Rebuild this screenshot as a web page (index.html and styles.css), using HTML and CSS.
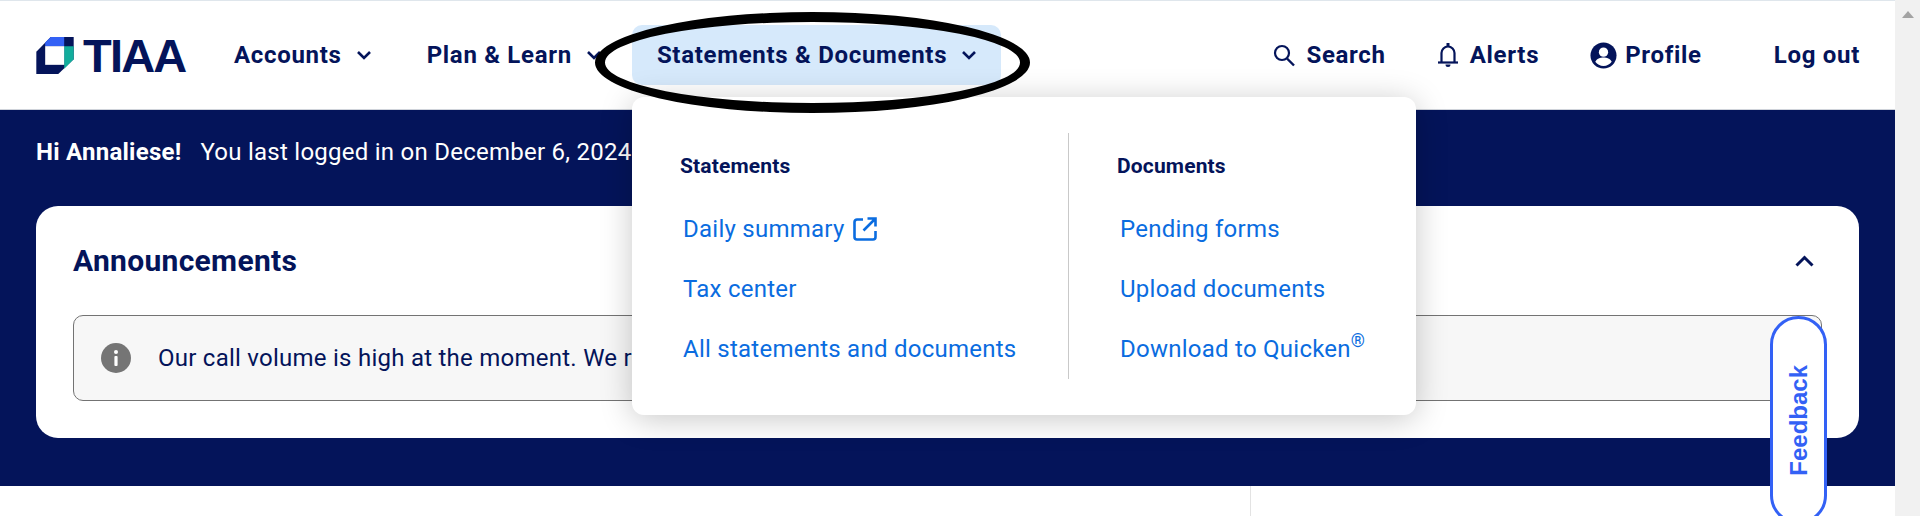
FILE: index.html
```html
<!DOCTYPE html>
<html lang="en">
<head>
<meta charset="utf-8">
<title>TIAA</title>
<link rel="stylesheet" href="styles.css">
</head>
<body>
<div class="page">
  <main class="main">
    <header class="header">
      <a class="logo">
        <svg class="logo-mark" viewBox="0 0 114 113" aria-hidden="true">
          <path fill="#04145a" d="M0 45 44 0H114V68L67 113H0Z"/>
          <path fill="#3361f5" d="M44 0H85V28H27V17Z"/>
          <path fill="#12ad9c" d="M85 28H114V68L85 97Z"/>
          <path fill="#fff" d="M27 28H85V85H27Z"/>
        </svg>
        <span class="logo-text">TIAA</span>
      </a>
      <nav class="nav">
        <a class="nav-item">Accounts<svg class="chev" viewBox="0 0 14 9"><path d="M1 1l6 6 6-6"/></svg></a>
        <a class="nav-item">Plan &amp; Learn<svg class="chev" viewBox="0 0 14 9"><path d="M1 1l6 6 6-6"/></svg></a>
        <a class="nav-item nav-item-active">Statements &amp; Documents<svg class="chev" viewBox="0 0 14 9"><path d="M1 1l6 6 6-6"/></svg></a>
      </nav>
      <div class="tools">
        <a class="tool">
          <svg class="tool-icon" viewBox="0 0 22 24"><circle cx="9" cy="10" r="7" fill="none" stroke="#04145a" stroke-width="2.200"/><path d="M14 15.500 21 22.500" stroke="#04145a" stroke-width="2.400" fill="none"/></svg>
          Search
        </a>
        <a class="tool">
          <svg class="tool-icon" viewBox="0 0 22 24"><path fill="none" stroke="#04145a" stroke-width="2.200" d="M4.500 19V10a6.500 6.500 0 0 1 13 0v9"/><path stroke="#04145a" stroke-width="2.200" d="M1 19.500h20"/><path fill="#04145a" d="M9.500 0h3v3h-3zM8.500 21.500h5a2.500 2.500 0 0 1-5 0z"/></svg>
          Alerts
        </a>
        <a class="tool tool-profile">
          <svg class="tool-icon-lg" viewBox="0 0 28 28"><circle cx="14" cy="14" r="13.500" fill="#04145a"/><circle cx="14" cy="10.500" r="4.800" fill="#fff"/><path fill="#fff" d="M5.500 20.500c1.500-3.500 5-4.500 8.500-4.500s7 1 8.500 4.500c-2 2.800-5 4.300-8.500 4.300s-6.500-1.500-8.500-4.300z"/></svg>
          Profile
        </a>
        <a class="tool tool-logout">Log out</a>
      </div>
    </header>

    <section class="hero">
      <p class="greeting"><strong class="greeting-name">Hi Annaliese!</strong><span>You last logged in on December 6, 2024</span></p>
      <div class="card">
        <div class="card-head">
          <h2 class="card-title">Announcements</h2>
          <svg class="chev-up" viewBox="0 0 19 12"><path d="M1.500 10.500 9.500 2.500l8 8"/></svg>
        </div>
        <div class="alert">
          <svg class="alert-icon" viewBox="0 0 30 30"><circle cx="15" cy="15" r="15" fill="#757575"/><circle cx="15" cy="9" r="2" fill="#fff"/><rect x="13.400" y="13" width="3.200" height="10" rx="1" fill="#fff"/></svg>
          <span>Our call volume is high at the moment. We r</span>
        </div>
      </div>
    </section>

    <div class="lower"><div class="lower-left"></div></div>
  </main>

  <aside class="scrollbar"><span class="scroll-up"></span></aside>

  <div class="menu">
    <div class="menu-col">
      <h3 class="menu-heading">Statements</h3>
      <a class="menu-link">Daily summary<svg class="ext" viewBox="0 0 24 24"><path d="M10 2.500H4A2.500 2.500 0 0 0 1.500 5v15A2.500 2.500 0 0 0 4 22.500h16a2.500 2.500 0 0 0 2.500-2.500v-6M14.500 1.500h8v8M22 2 10.500 13.500"/></svg></a>
      <a class="menu-link">Tax center</a>
      <a class="menu-link">All statements and documents</a>
    </div>
    <div class="menu-col menu-col-right">
      <h3 class="menu-heading">Documents</h3>
      <a class="menu-link">Pending forms</a>
      <a class="menu-link">Upload documents</a>
      <a class="menu-link">Download to Quicken<sup class="reg">®</sup></a>
    </div>
  </div>

  <div class="annotation"></div>

  <button class="feedback"><span class="feedback-label">Feedback</span></button>
</div>
</body>
</html>
```

FILE: styles.css
```css
* { box-sizing: border-box; }
html, body { margin: 0; height: 516px; overflow: hidden; background: #fff; }
body { font-family: Roboto, "Liberation Sans", sans-serif; color: #04145a; }

.page { position: relative; display: flex; width: 1920px; height: 516px; overflow: hidden; }
.main { flex: 1; display: flex; flex-direction: column; min-width: 0; }

/* Header */
.header {
  height: 110px;
  display: flex;
  align-items: center;
  padding: 0 35px 0 36px;
  border-top: 1px solid #dfe6ec;
  border-bottom: 1px solid #cfd3da;
  background: #fff;
}
.logo { display: flex; align-items: center; gap: 9px; width: 150px; }
.logo-mark { width: 38px; height: 37px; flex: none; }
.logo-text {
  font-family: "Liberation Sans", Arial, sans-serif;
  font-weight: 700;
  font-size: 47px;
  line-height: 37px;
  letter-spacing: -1.800px;
  color: #04145a;
}
.nav { display: flex; gap: 6px; margin-left: 23px; }
.nav-item {
  display: flex;
  align-items: center;
  gap: 15px;
  height: 60px;
  padding: 0 25px;
  border-radius: 10px;
  font-size: 24px;
  font-weight: 700;
  letter-spacing: 0.700px;
}
.nav-item-active { background: #d6e9fb; }
.chev { width: 14px; height: 9px; flex: none; }
.chev path, .chev-up path { fill: none; stroke: #04145a; stroke-width: 2.600; }
.chev-up path { stroke-width: 3; }

.tools { display: flex; align-items: center; gap: 51px; margin-left: auto; }
.tool {
  display: flex;
  align-items: center;
  gap: 11px;
  font-size: 24px;
  font-weight: 700;
  letter-spacing: 0.700px;
}
.tool-profile { gap: 8px; }
.tool-icon { width: 22px; height: 24px; flex: none; }
.tool-icon-lg { width: 27px; height: 27px; flex: none; }
.tool-logout { margin-left: 21px; }

/* Hero */
.hero { background: #04145a; height: 376px; padding: 0 36px; }
.greeting {
  margin: 0;
  height: 96px;
  display: flex;
  align-items: center;
  gap: 19px;
  padding-bottom: 12px;
  color: #fff;
  font-size: 24px;
  letter-spacing: 0.250px;
}
.greeting-name { font-weight: 700; }
.card {
  height: 232px;
  padding: 0 37px;
  background: #fff;
  border-radius: 22px;
}
.card-head {
  height: 109px;
  display: flex;
  align-items: center;
  justify-content: space-between;
}
.card-title { margin: 0; font-size: 30px; letter-spacing: 0.300px; font-weight: 700; }
.chev-up { width: 19px; height: 12px; margin-right: 8px; }
.alert {
  height: 86px;
  display: flex;
  align-items: center;
  gap: 27px;
  padding-left: 27px;
  background: #f7f7f7;
  border: 1px solid #737373;
  border-radius: 10px;
  font-size: 24px;
  letter-spacing: 0.250px;
}
.alert-icon { width: 30px; height: 30px; flex: none; }

.lower { flex: 1; display: flex; }
.lower-left { width: 1251px; border-right: 1px solid #e3e3e3; }

/* Scrollbar */
.scrollbar { width: 25px; flex: none; background: #f1f1f1; display: flex; justify-content: center; padding-top: 11px; }
.scroll-up {
  width: 0; height: 0;
  border-left: 6px solid transparent;
  border-right: 6px solid transparent;
  border-bottom: 7px solid #a3a3a3;
}

/* Dropdown */
.menu {
  position: absolute;
  left: 632px;
  top: 97px;
  width: 784px;
  height: 318px;
  padding: 36px 0;
  display: grid;
  grid-template-columns: 436px 1fr;
  background: #fff;
  border-radius: 12px;
  box-shadow: 0 4px 32px rgba(0, 0, 0, 0.22);
}
.menu-col { height: 246px; padding-left: 48px; }
.menu-col-right { border-left: 1px solid #c9c9c9; padding-left: 48px; }
.menu-heading {
  margin: 0 0 21px;
  padding-top: 21px;
  height: 45px;
  font-size: 21px;
  line-height: 24px;
  letter-spacing: 0.150px;
  font-weight: 700;
  color: #04145a;
}
.menu-link {
  display: flex;
  align-items: center;
  height: 60px;
  margin-left: 3px;
  font-size: 24px;
  letter-spacing: 0.250px;
  color: #0a6ce0;
}
.ext { width: 24px; height: 24px; margin-left: 8px; fill: none; stroke: #0a6ce0; stroke-width: 2.600; }
.reg { font-size: 18px; line-height: 1; align-self: flex-start; margin-top: 13px; }

/* Hand-drawn annotation */
.annotation {
  position: absolute;
  left: 595px;
  top: 12px;
  width: 435px;
  height: 101px;
  border: 10px solid #000;
  border-radius: 50%;
}

/* Feedback tab */
.feedback {
  position: absolute;
  left: 1770px;
  top: 316px;
  width: 57px;
  height: 208px;
  padding: 0;
  display: flex;
  align-items: center;
  justify-content: center;
  background: #fff;
  border: 3px solid #3361f5;
  border-radius: 29px;
}
.feedback-label {
  writing-mode: vertical-rl;
  transform: rotate(180deg);
  font-family: "Liberation Sans", Arial, sans-serif;
  font-weight: 700;
  font-size: 24px;
  color: #3361f5;
}
```
